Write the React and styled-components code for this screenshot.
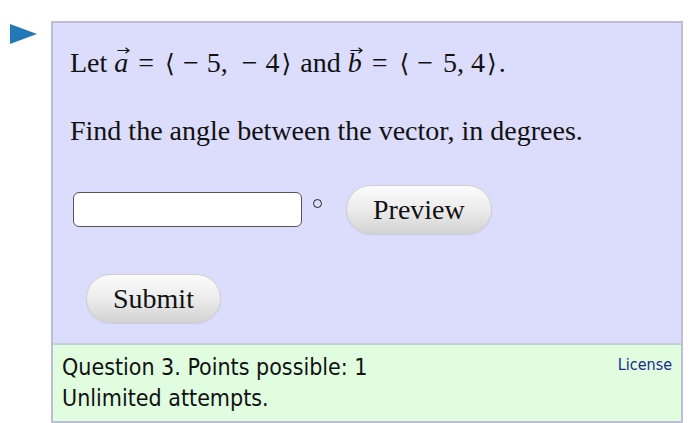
import React from "react";
import styled, { createGlobalStyle } from "styled-components";

const Global = createGlobalStyle`
  body {
    margin: 0;
    background: #ffffff;
  }
`;

const Page = styled.div`
  display: flex;
  flex-direction: row;
  align-items: flex-start;
  padding: 21px 0 0 10px;
`;

const Arrow = styled.div`
  width: 0;
  height: 0;
  border-top: 10px solid transparent;
  border-bottom: 10px solid transparent;
  border-left: 27px solid #2379b8;
  margin: 3px 14px 0 0;
`;

const Panel = styled.div`
  width: 628px;
  border: 2px solid #bdbdda;
`;

const Question = styled.div`
  background: #dcdcfc;
  padding: 20px 0 20px 17px;
  font-family: "Liberation Serif", "DejaVu Serif", serif;
  font-size: 28px;
  color: #111;
`;

const Line = styled.p`
  margin: 0 0 ${(p) => p.$gap || 0}px;
  line-height: 40px;
  white-space: nowrap;
`;

const Op = styled.span`
  margin: 0 ${(p) => p.$r ?? 8}px 0 ${(p) => p.$l ?? 8}px;
`;

const Vec = styled.span`
  position: relative;
  display: inline-block;
  font-style: italic;
  margin: 0 2px 0 0;
`;

const VecArrow = styled.svg`
  position: absolute;
  left: ${(p) => p.$x}px;
  top: 4px;
`;

const Bracket = styled.span`
  font-family: "DejaVu Serif", serif;
  font-size: 25px;
  margin: 0 ${(p) => p.$r ?? 2}px 0 ${(p) => p.$l ?? 2}px;
`;

const AnswerRow = styled.div`
  display: flex;
  align-items: center;
  margin: 34px 0 0 3px;
`;

const Input = styled.input`
  width: 227px;
  height: 33px;
  box-sizing: content-box;
  padding: 0;
  border: 1.5px solid #555;
  border-radius: 6px;
  background: #fff;
`;

const Degree = styled.span`
  width: 7px;
  height: 7px;
  border: 1.3px solid #222;
  border-radius: 50%;
  margin: 0 24px 12px 11px;
`;

const Pill = styled.button`
  height: 49px;
  padding: 0 26px;
  border: 1.5px solid #cfcfcf;
  border-radius: 25px;
  background: linear-gradient(#fbfbfb, #ececec 50%, #d3d3d3);
  font-family: "Liberation Serif", serif;
  font-size: 28px;
  color: #111;
  box-shadow: 0 1px 1px rgba(0, 0, 0, 0.08);
`;

const SubmitRow = styled.div`
  margin: 40px 0 0 16px;
`;

const Footer = styled.div`
  position: relative;
  background: #e0fde0;
  border-top: 2px solid #c2cfd6;
  padding: 7px 10px 7px 9px;
  font-family: "DejaVu Sans Condensed", "DejaVu Sans", sans-serif;
  font-size: 23px;
  line-height: 31px;
  color: #111;
`;

const License = styled.a`
  position: absolute;
  right: 9px;
  top: 10px;
  font-size: 16px;
  line-height: 20px;
  color: #1c2a8c;
  text-decoration: none;
`;

const ArrowMark = ({ x }) => (
  <VecArrow $x={x} width="13" height="7" viewBox="0 0 13 7">
    <path d="M0.5 3.5H11.5M8.5 0.8L12 3.5L8.5 6.2" stroke="#111" strokeWidth="1.2" fill="none" />
  </VecArrow>
);

export default function App() {
  return (
    <>
      <Global />
      <Page>
        <Arrow />
        <Panel>
          <Question>
            <Line $gap={27}>
              Let{" "}
              <Vec>
                a<ArrowMark x={3} />
              </Vec>
              <Op>=</Op>
              <Bracket $l={3}>⟨</Bracket>
              <Op $l={6} $r={8}>−</Op>5,
              <Op $l={14} $r={8}>−</Op>4<Bracket>⟩</Bracket> and{" "}
              <Vec>
                b<ArrowMark x={2} />
              </Vec>
              <Op>=</Op>
              <Bracket $l={4}>⟨</Bracket>
              <Op $l={6} $r={10}>−</Op>5, 4<Bracket>⟩</Bracket>.
            </Line>
            <Line>Find the angle between the vector, in degrees.</Line>
            <AnswerRow>
              <Input type="text" />
              <Degree />
              <Pill>Preview</Pill>
            </AnswerRow>
            <SubmitRow>
              <Pill>Submit</Pill>
            </SubmitRow>
          </Question>
          <Footer>
            Question 3. Points possible: 1
            <br />
            Unlimited attempts.
            <License href="#">License</License>
          </Footer>
        </Panel>
      </Page>
    </>
  );
}
